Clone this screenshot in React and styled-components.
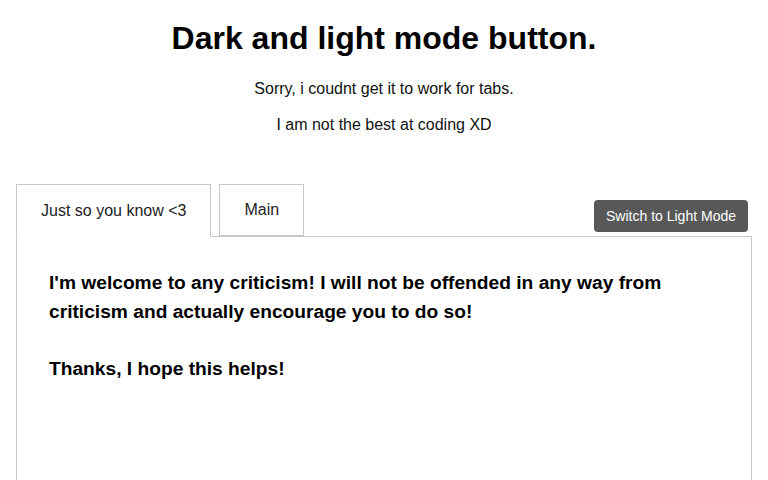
import styled, { createGlobalStyle } from "styled-components";
import { useState } from "react";

const GlobalStyle = createGlobalStyle`
  body {
    margin: 0;
    font-family: "Liberation Sans", Arial, sans-serif;
    background: #fff;
    color: #000;
  }
`;

export default function App() {
  const [active, setActive] = useState(0);
  const [light, setLight] = useState(false);

  return (
    <Page>
      <GlobalStyle />
      <Header>
        <Title>Dark and light mode button.</Title>
        <Note>Sorry, i coudnt get it to work for tabs.</Note>
        <Note>I am not the best at coding XD</Note>
      </Header>
      <TabBar>
        <Tabs>
          <Tab $active={active === 0} onClick={() => setActive(0)}>
            Just so you know &lt;3
          </Tab>
          <Tab $active={active === 1} onClick={() => setActive(1)}>
            Main
          </Tab>
        </Tabs>
        <ModeButton onClick={() => setLight(!light)}>
          Switch to {light ? "Dark" : "Light"} Mode
        </ModeButton>
      </TabBar>
      <Panel>
        {active === 0 ? (
          <Message>
            I'm welcome to any criticism! I will not be offended in any way from
            criticism and actually encourage you to do so!
            <br />
            <br />
            Thanks, I hope this helps!
          </Message>
        ) : (
          <Message>Main</Message>
        )}
      </Panel>
    </Page>
  );
}

const Page = styled.div`
  padding: 0 16px;
`;

const Header = styled.div`
  text-align: center;
  padding-top: 20px;
`;

const Title = styled.h1`
  margin: 0 0 23px;
  font-size: 32px;
  line-height: 37px;
  font-weight: 700;
`;

const Note = styled.p`
  margin: 0 0 18px;
  font-size: 16px;
  line-height: 18px;
  color: #111;
`;

const TabBar = styled.div`
  display: flex;
  justify-content: space-between;
  align-items: flex-end;
  margin-top: 50px;
`;

const Tabs = styled.div`
  display: flex;
  gap: 8px;
`;

const Tab = styled.button`
  position: relative;
  z-index: 1;
  margin-bottom: -1px;
  padding: 16px 24px;
  height: ${(p) => (p.$active ? "53px" : "52px")};
  font-family: inherit;
  font-size: 16px;
  color: #222;
  background: #fff;
  border: 1px solid #c8c8c8;
  border-bottom-color: ${(p) => (p.$active ? "#fff" : "#c8c8c8")};
  cursor: pointer;
`;

const ModeButton = styled.button`
  margin: 0 4px 4px 0;
  padding: 0 12px;
  height: 32px;
  font-family: inherit;
  font-size: 14px;
  color: #fff;
  background: #585858;
  border: none;
  border-radius: 4px;
  cursor: pointer;
`;

const Panel = styled.div`
  border: 1px solid #c8c8c8;
  min-height: 300px;
  padding: 32px 32px;
`;

const Message = styled.p`
  margin: 0;
  font-size: 19.2px;
  line-height: 28.5px;
  font-weight: 700;
`;
